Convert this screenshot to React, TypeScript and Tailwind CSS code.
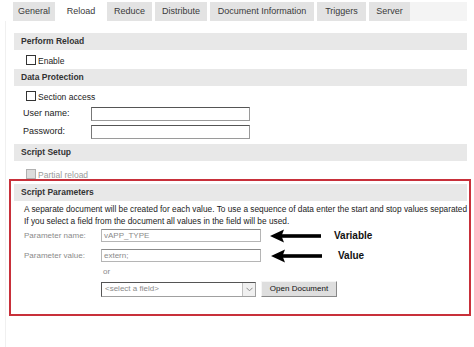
import React from "react";

const tabs = ["General", "Reload", "Reduce", "Distribute", "Document Information", "Triggers", "Server"];
const tabWidths = ["w-[42px]", "w-[46px]", "w-[45px]", "w-[52px]", "w-[104px]", "w-[49px]", "w-[41px]"];

function SectionHeader({ title }: { title: string }) {
  return (
    <div className="h-[17px] bg-[#e8e8e8] flex items-center pl-[7px] text-[8.5px] font-bold text-[#333]">
      {title}
    </div>
  );
}

function Checkbox({ label, disabled }: { label: string; disabled?: boolean }) {
  return (
    <div className="flex items-center h-[12px] pl-[12px]">
      <span
        className={
          disabled
            ? "w-[10px] h-[10px] border border-[#b0b0b0] bg-[#dcdcdc]"
            : "w-[10px] h-[10px] border border-[#333] bg-white"
        }
      />
      <span className={disabled ? "ml-[2px] mt-[3px] text-[8.5px] text-[#9a9a9a]" : "ml-[2px] mt-[3px] text-[8.5px] text-[#222]"}>
        {label}
      </span>
    </div>
  );
}

function Arrow() {
  return (
    <svg width="52" height="14" viewBox="0 0 52 14">
      <rect x="9" y="5.2" width="42" height="3.6" fill="#000" />
      <path d="M0 7 L14 0.5 L11.5 7 L14 13.5 Z" fill="#000" />
    </svg>
  );
}

export default function App() {
  return (
    <div className="w-[474px] h-[347px] bg-white overflow-hidden font-['Liberation_Sans',Arial,sans-serif] text-[#222]">
      {/* tab strip */}
      <div className="flex pt-[2px] pl-[13px] pr-[7px] h-[21px]">
        {tabs.map((t, i) => (
          <div
            key={t}
            className={
              (i === 1 ? "bg-white " : "bg-[#e3e3e3] ") +
              tabWidths[i] +
              " h-[19px] mr-[3px] flex items-center justify-center text-[9px] text-[#3a3a3a]"
            }
          >
            {t}
          </div>
        ))}
        <div className="flex-1 h-[19px] bg-[#f4f4f4] -ml-[3px]" />
      </div>

      <div className="ml-[5px] border-l border-[#f0f0f0] pl-[8px] pr-[7px] pt-[12px] h-[326px]">
        <SectionHeader title="Perform Reload" />
        <div className="pt-[4px] pb-[3px]">
          <Checkbox label="Enable" />
        </div>
        <SectionHeader title="Data Protection" />
        <div className="pt-[4px]">
          <Checkbox label="Section access" />
        </div>
        <div className="flex items-center mt-[5px] pl-[9px] h-[14px]">
          <span className="w-[68px] text-[9px]">User name:</span>
          <div className="w-[159px] h-[14px] bg-white border border-[#9a9a9a] border-t-[#555] border-l-[#777]" />
        </div>
        <div className="flex items-center mt-[4px] pl-[9px] h-[14px]">
          <span className="w-[68px] text-[9px]">Password:</span>
          <div className="w-[159px] h-[14px] bg-white border border-[#9a9a9a] border-t-[#555] border-l-[#777]" />
        </div>
        <div className="mt-[5px]">
          <SectionHeader title="Script Setup" />
        </div>
        <div className="pt-[7px]">
          <Checkbox label="Partial reload" disabled />
        </div>

        {/* annotated block */}
        <div className="-ml-[5px] -mr-[4px] mt-[-1px] border-2 border-[#c8303a] pl-[3px] pr-[2px] pt-[3px] h-[137px]">
          <SectionHeader title="Script Parameters" />
          <div className="pl-[10px] pt-[2px] text-[8.3px] leading-[12px] whitespace-nowrap text-[#222]">
            A separate document will be created for each value. To use a sequence of data enter the start and stop values separated
            <br />
            If you select a field from the document all values in the field will be used.
          </div>
          <div className="flex items-center mt-[2px] pl-[10px] h-[13px]">
            <span className="w-[77px] text-[8px] text-[#8a8a8a]">Parameter name:</span>
            <div className="w-[160px] h-[13px] border border-[#b5b5b5] border-t-[#8a8a8a] flex items-center pl-[2px] text-[8px] text-[#8a8a8a]">
              vAPP_TYPE
            </div>
            <div className="ml-[9px] flex items-center">
              <Arrow />
              <span className="ml-[12px] text-[10px] font-bold text-[#111]">Variable</span>
            </div>
          </div>
          <div className="flex items-center mt-[7px] pl-[10px] h-[13px]">
            <span className="w-[77px] text-[8px] text-[#8a8a8a]">Parameter value:</span>
            <div className="w-[160px] h-[13px] border border-[#b5b5b5] border-t-[#8a8a8a] flex items-center pl-[2px] text-[8px] text-[#8a8a8a]">
              extern;
            </div>
            <div className="ml-[10px] flex items-center">
              <Arrow />
              <span className="ml-[15px] text-[10px] font-bold text-[#111]">Value</span>
            </div>
          </div>
          <div className="pl-[89px] mt-[4px] text-[8px] text-[#8a8a8a] h-[12px]">or</div>
          <div className="flex items-center pl-[87px] mt-[3px]">
            <div className="w-[155px] h-[15px] border border-[#a0a0a0] border-t-[#555] border-l-[#555] flex items-center">
              <span className="flex-1 pl-[3px] text-[8px] text-[#8a8a8a]">&lt;select a field&gt;</span>
              <span className="w-[13px] h-[13px] border-l border-[#c0c0c0] bg-[#f0f0f0] flex items-center justify-center">
                <svg width="7" height="5" viewBox="0 0 7 5">
                  <path d="M0.5 0.8 L3.5 3.8 L6.5 0.8" fill="none" stroke="#8a8a8a" strokeWidth="1" />
                </svg>
              </span>
            </div>
            <button className="ml-[5px] w-[76px] h-[16px] bg-[#dedede] border border-[#888] border-t-[#f5f5f5] border-l-[#f5f5f5] text-[8px] text-[#111] flex items-center justify-center">
              Open Document
            </button>
          </div>
        </div>
      </div>
    </div>
  );
}
